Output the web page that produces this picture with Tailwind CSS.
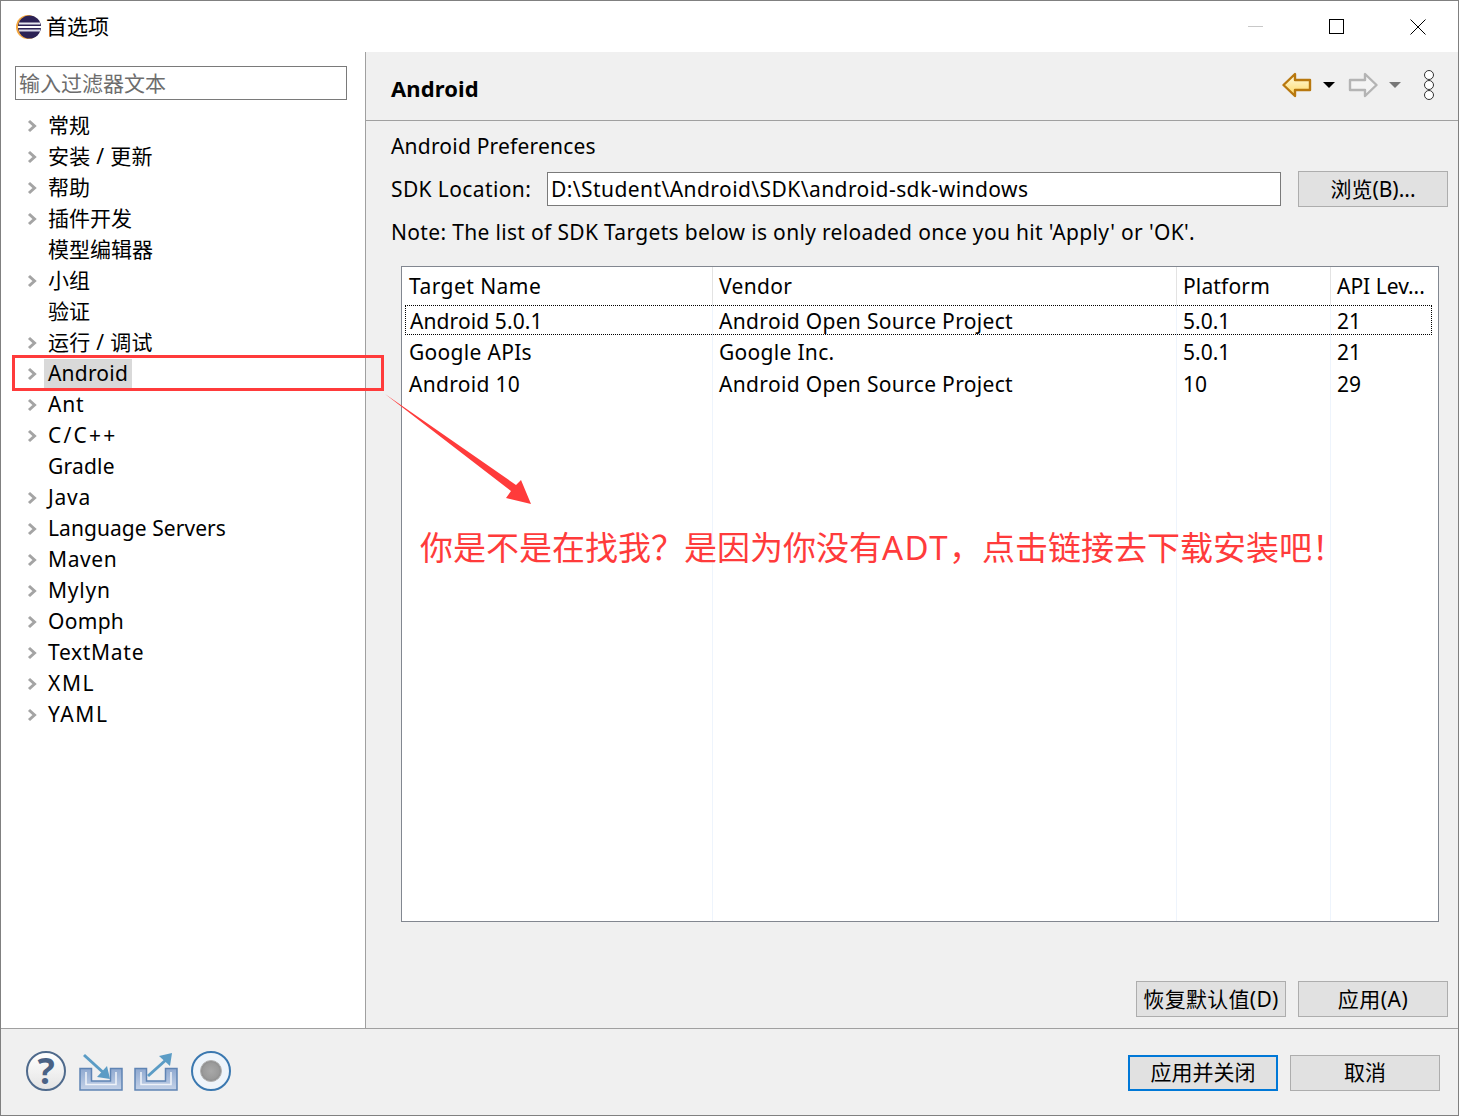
<!DOCTYPE html>
<html lang="zh-CN">
<head>
<meta charset="UTF-8">
<title>首选项</title>
<script src="https://cdn.jsdelivr.net/npm/@tailwindcss/browser@4"></script>
</head>
<body class="m-0 bg-white">
<div class="relative w-[1459px] h-[1116px] overflow-hidden border border-[#808080] flex flex-col bg-white text-black text-[21px] font-['Noto_Sans','Noto_Sans_CJK_SC',sans-serif]">

  <!-- title bar -->
  <div class="h-[51px] shrink-0 flex items-center bg-white">
    <svg class="ml-[15px] w-[26px] h-[26px]" viewBox="0 0 26 26">
      <circle cx="12" cy="13" r="12" fill="#f5a840"/>
      <circle cx="13.5" cy="13" r="11.5" fill="#2c2255"/>
      <rect x="3" y="8.5" width="21" height="2" fill="#e8e8f0"/>
      <rect x="2" y="12" width="23" height="2" fill="#fff"/>
      <rect x="3" y="15.5" width="21" height="2" fill="#d8d8e8"/>
    </svg>
    <span class="ml-[4px] text-[21px] leading-none">首选项</span>
    <div class="ml-auto flex items-center">
      <div class="w-[15px] h-px bg-[#c8c8c8] mr-[66px]"></div>
      <div class="w-[15px] h-[15px] border border-black mr-[66px]"></div>
      <svg class="w-[16px] h-[16px] mr-[32px]" viewBox="0 0 16 16"><path d="M0.5 0.5L15.5 15.5M15.5 0.5L0.5 15.5" stroke="#000" stroke-width="1"/></svg>
    </div>
  </div>

  <div class="flex-1 flex min-h-0">
    <!-- left tree -->
    <div class="w-[365px] shrink-0 bg-white border-r border-[#a0a0a0] pt-[14px]">
      <div class="ml-[14px] w-[332px] h-[34px] border border-[#7a7a7a] flex items-center pl-[3px] pt-[2px] text-[#6d6d6d]">输入过滤器文本</div>
      <div class="mt-[10px] flex flex-col">
        <div class="h-[31px] flex items-center pl-[26px]"><svg class="w-[10px] h-[14px]" viewBox="0 0 10 14"><path d="M2 2L7.5 7L2 12" fill="none" stroke="#a4a4a4" stroke-width="3"/></svg><span class="ml-[11px]">常规</span></div>
        <div class="h-[31px] flex items-center pl-[26px]"><svg class="w-[10px] h-[14px]" viewBox="0 0 10 14"><path d="M2 2L7.5 7L2 12" fill="none" stroke="#a4a4a4" stroke-width="3"/></svg><span class="ml-[11px] tracking-[0.3px]">安装 / 更新</span></div>
        <div class="h-[31px] flex items-center pl-[26px]"><svg class="w-[10px] h-[14px]" viewBox="0 0 10 14"><path d="M2 2L7.5 7L2 12" fill="none" stroke="#a4a4a4" stroke-width="3"/></svg><span class="ml-[11px]">帮助</span></div>
        <div class="h-[31px] flex items-center pl-[26px]"><svg class="w-[10px] h-[14px]" viewBox="0 0 10 14"><path d="M2 2L7.5 7L2 12" fill="none" stroke="#a4a4a4" stroke-width="3"/></svg><span class="ml-[11px]">插件开发</span></div>
        <div class="h-[31px] flex items-center pl-[47px]">模型编辑器</div>
        <div class="h-[31px] flex items-center pl-[26px]"><svg class="w-[10px] h-[14px]" viewBox="0 0 10 14"><path d="M2 2L7.5 7L2 12" fill="none" stroke="#a4a4a4" stroke-width="3"/></svg><span class="ml-[11px]">小组</span></div>
        <div class="h-[31px] flex items-center pl-[47px]">验证</div>
        <div class="h-[31px] flex items-center pl-[26px]"><svg class="w-[10px] h-[14px]" viewBox="0 0 10 14"><path d="M2 2L7.5 7L2 12" fill="none" stroke="#a4a4a4" stroke-width="3"/></svg><span class="ml-[11px] tracking-[0.3px]">运行 / 调试</span></div>
        <div class="h-[31px] flex items-center pl-[26px]"><svg class="w-[10px] h-[14px]" viewBox="0 0 10 14"><path d="M2 2L7.5 7L2 12" fill="none" stroke="#a4a4a4" stroke-width="3"/></svg><span class="ml-[7px] px-[4px] bg-[#d9d9d9] h-[30px] flex items-center tracking-[0.2px]">Android</span></div>
        <div class="h-[31px] flex items-center pl-[26px]"><svg class="w-[10px] h-[14px]" viewBox="0 0 10 14"><path d="M2 2L7.5 7L2 12" fill="none" stroke="#a4a4a4" stroke-width="3"/></svg><span class="ml-[11px] tracking-[0.8px]">Ant</span></div>
        <div class="h-[31px] flex items-center pl-[26px]"><svg class="w-[10px] h-[14px]" viewBox="0 0 10 14"><path d="M2 2L7.5 7L2 12" fill="none" stroke="#a4a4a4" stroke-width="3"/></svg><span class="ml-[11px] tracking-[2.2px]">C/C++</span></div>
        <div class="h-[31px] flex items-center pl-[47px] tracking-[0.2px]">Gradle</div>
        <div class="h-[31px] flex items-center pl-[26px]"><svg class="w-[10px] h-[14px]" viewBox="0 0 10 14"><path d="M2 2L7.5 7L2 12" fill="none" stroke="#a4a4a4" stroke-width="3"/></svg><span class="ml-[11px] tracking-[0.8px]">Java</span></div>
        <div class="h-[31px] flex items-center pl-[26px]"><svg class="w-[10px] h-[14px]" viewBox="0 0 10 14"><path d="M2 2L7.5 7L2 12" fill="none" stroke="#a4a4a4" stroke-width="3"/></svg><span class="ml-[11px] tracking-[0.06px]">Language Servers</span></div>
        <div class="h-[31px] flex items-center pl-[26px]"><svg class="w-[10px] h-[14px]" viewBox="0 0 10 14"><path d="M2 2L7.5 7L2 12" fill="none" stroke="#a4a4a4" stroke-width="3"/></svg><span class="ml-[11px] tracking-[0.6px]">Maven</span></div>
        <div class="h-[31px] flex items-center pl-[26px]"><svg class="w-[10px] h-[14px]" viewBox="0 0 10 14"><path d="M2 2L7.5 7L2 12" fill="none" stroke="#a4a4a4" stroke-width="3"/></svg><span class="ml-[11px] tracking-[0.8px]">Mylyn</span></div>
        <div class="h-[31px] flex items-center pl-[26px]"><svg class="w-[10px] h-[14px]" viewBox="0 0 10 14"><path d="M2 2L7.5 7L2 12" fill="none" stroke="#a4a4a4" stroke-width="3"/></svg><span class="ml-[11px] tracking-[0.3px]">Oomph</span></div>
        <div class="h-[31px] flex items-center pl-[26px]"><svg class="w-[10px] h-[14px]" viewBox="0 0 10 14"><path d="M2 2L7.5 7L2 12" fill="none" stroke="#a4a4a4" stroke-width="3"/></svg><span class="ml-[11px] tracking-[0.7px]">TextMate</span></div>
        <div class="h-[31px] flex items-center pl-[26px]"><svg class="w-[10px] h-[14px]" viewBox="0 0 10 14"><path d="M2 2L7.5 7L2 12" fill="none" stroke="#a4a4a4" stroke-width="3"/></svg><span class="ml-[11px] tracking-[1.6px]">XML</span></div>
        <div class="h-[31px] flex items-center pl-[26px]"><svg class="w-[10px] h-[14px]" viewBox="0 0 10 14"><path d="M2 2L7.5 7L2 12" fill="none" stroke="#a4a4a4" stroke-width="3"/></svg><span class="ml-[11px] tracking-[1.6px]">YAML</span></div>
      </div>
    </div>

    <!-- right page -->
    <div class="flex-1 min-w-0 bg-[#f0f0f0] flex flex-col">
      <div class="h-[69px] shrink-0 border-b border-[#a0a0a0] flex items-center pl-[25px]">
        <span class="font-bold text-[22px] mt-[4px] tracking-[0.1px]">Android</span>
        <div class="ml-auto flex items-center mr-[25px] mb-[2px]">
          <svg class="w-[30px] h-[26px]" viewBox="0 0 30 26"><defs><linearGradient id="lg" x1="0" y1="0" x2="0" y2="1"><stop offset="0" stop-color="#fffde8"/><stop offset="1" stop-color="#ffd860"/></linearGradient></defs><path d="M1.5 13L13 2V8H28V18H13V24Z" fill="url(#lg)" stroke="#b8780f" stroke-width="2.4" stroke-linejoin="round"/></svg>
          <div class="ml-[11px] w-0 h-0 border-x-[6px] border-x-transparent border-t-[6px] border-t-black"></div>
          <svg class="ml-[13px] w-[30px] h-[26px]" viewBox="0 0 30 26"><path d="M28.5 13L17 2V8H2V18H17V24Z" fill="#f4f4f4" stroke="#b4b4b4" stroke-width="2.4" stroke-linejoin="round"/></svg>
          <div class="ml-[11px] w-0 h-0 border-x-[6px] border-x-transparent border-t-[6px] border-t-[#777]"></div>
          <div class="ml-[23px] -mr-px flex flex-col items-center">
            <div class="w-[10px] h-[10px] rounded-full border-[1.5px] border-[#333] bg-white"></div>
            <div class="w-[10px] h-[10px] rounded-full border-[1.5px] border-[#333] bg-white"></div>
            <div class="w-[10px] h-[10px] rounded-full border-[1.5px] border-[#333] bg-white"></div>
          </div>
        </div>
      </div>

      <div class="flex-1 min-h-0 flex flex-col pl-[25px] pr-[10px]">
        <div class="mt-[11px] h-[30px] flex items-center tracking-[0.2px]">Android Preferences</div>
        <div class="mt-[9px] h-[36px] flex items-center">
          <span class="w-[156px] pt-[2px] tracking-[0.38px]">SDK Location:</span>
          <div class="w-[734px] h-[34px] bg-white border border-[#7a7a7a] flex items-center pl-[3px] pt-[2px] tracking-[0.43px]">D:\Student\Android\SDK\android-sdk-windows</div>
          <div class="ml-[17px] w-[150px] h-[36px] bg-[#e1e1e1] border border-[#adadad] flex items-center justify-center pt-[2px]">浏览(B)...</div>
        </div>
        <div class="mt-[11px] h-[30px] flex items-center tracking-[0.33px]">Note: The list of SDK Targets below is only reloaded once you hit 'Apply' or 'OK'.</div>

        <!-- target table -->
        <div class="relative mt-[18px] ml-[10px] w-[1038px] h-[656px] bg-white border border-[#828790]">
          <div class="absolute top-0 bottom-0 left-[310px] w-px bg-[#eef4fc]"></div>
          <div class="absolute top-0 bottom-0 left-[774px] w-px bg-[#eef4fc]"></div>
          <div class="absolute top-0 bottom-0 left-[928px] w-px bg-[#eef4fc]"></div>
          <div class="absolute top-0 h-[38px] left-[310px] w-px bg-[#e3e3e3]"></div>
          <div class="absolute top-0 h-[38px] left-[774px] w-px bg-[#e3e3e3]"></div>
          <div class="absolute top-0 h-[38px] left-[928px] w-px bg-[#e3e3e3]"></div>
          <div class="relative grid grid-cols-[310px_464px_154px_1fr] h-[38px] items-center pt-[2px]">
            <span class="pl-[7px] tracking-[0.45px]">Target Name</span><span class="pl-[7px] tracking-[0.35px]">Vendor</span><span class="pl-[7px] tracking-[0.15px]">Platform</span><span class="pl-[7px] whitespace-nowrap">API Lev...</span>
          </div>
          <div class="relative grid grid-cols-[306px_464px_154px_1fr] h-[30px] items-center ml-[3px] w-[1027px] pb-[6px] border border-dotted border-black">
            <span class="pl-[4px] tracking-[0.1px]">Android 5.0.1</span><span class="pl-[7px] tracking-[0.33px]">Android Open Source Project</span><span class="pl-[7px]">5.0.1</span><span class="pl-[7px]">21</span>
          </div>
          <div class="relative grid grid-cols-[310px_464px_154px_1fr] h-[32px] mt-[2px] items-center">
            <span class="pl-[7px] tracking-[0.3px]">Google APIs</span><span class="pl-[7px] tracking-[0.3px]">Google Inc.</span><span class="pl-[7px]">5.0.1</span><span class="pl-[7px]">21</span>
          </div>
          <div class="relative grid grid-cols-[310px_464px_154px_1fr] h-[32px] items-center">
            <span class="pl-[7px] tracking-[0.3px]">Android 10</span><span class="pl-[7px] tracking-[0.33px]">Android Open Source Project</span><span class="pl-[7px]">10</span><span class="pl-[7px]">29</span>
          </div>
        </div>

        <div class="mt-auto mb-[11px] flex justify-end gap-[12px]">
          <div class="w-[150px] h-[36px] bg-[#e1e1e1] border border-[#adadad] flex items-center justify-center pt-[2px] tracking-[0.3px]">恢复默认值(D)</div>
          <div class="w-[150px] h-[36px] bg-[#e1e1e1] border border-[#adadad] flex items-center justify-center pt-[2px] tracking-[0.5px]">应用(A)</div>
        </div>
      </div>
    </div>
  </div>

  <!-- bottom bar -->
  <div class="h-[87px] shrink-0 bg-[#f0f0f0] border-t border-[#a0a0a0] flex items-center">
    <div class="ml-[25px] mb-[2px] flex items-center">
      <div class="w-[40px] h-[40px] rounded-full border-2 border-[#4f6a8c] bg-gradient-to-b from-white to-[#e4e4e4] flex items-center justify-center text-[36px] font-bold text-[#4a6285] leading-none">?</div>
      <svg class="ml-[13px] w-[44px] h-[40px]" viewBox="0 0 44 40">
        <defs><linearGradient id="tray" x1="0" y1="0" x2="0" y2="1"><stop offset="0" stop-color="#8fa9d0"/><stop offset="1" stop-color="#c4d2e8"/></linearGradient></defs>
        <path d="M1 17.5H12.5V30H31.5V17.5H43V39H1Z" fill="url(#tray)" stroke="#5f84b4" stroke-width="1.5"/>
        <path d="M7 21V33.5H37V21" fill="none" stroke="#eef2f8" stroke-width="1.6"/>
        <path d="M5 4L27 24" stroke="#5b9cc5" stroke-width="3"/>
        <path d="M31 28L18 26L28 15Z" fill="#5b9cc5"/>
      </svg>
      <svg class="ml-[11px] w-[44px] h-[40px]" viewBox="0 0 44 40">
        <path d="M1 17.5H12.5V30H31.5V17.5H43V39H1Z" fill="url(#tray)" stroke="#5f84b4" stroke-width="1.5"/>
        <path d="M7 21V33.5H37V21" fill="none" stroke="#eef2f8" stroke-width="1.6"/>
        <path d="M14 25L33 8" stroke="#5b9cc5" stroke-width="3"/>
        <path d="M38 2L36 15L25 5Z" fill="#5b9cc5"/>
      </svg>
      <svg class="ml-[13px] w-[40px] h-[40px]" viewBox="0 0 40 40">
        <defs><radialGradient id="disc"><stop offset="0" stop-color="#a8a8a8"/><stop offset="0.75" stop-color="#9a9a9a"/><stop offset="1" stop-color="#8a8a8a"/></radialGradient></defs>
        <circle cx="20" cy="20" r="19" fill="#eef4fa" stroke="#3a78b0" stroke-width="2"/>
        <circle cx="20" cy="20" r="10.5" fill="url(#disc)" stroke="#b4b4b4" stroke-width="1"/>
      </svg>
    </div>
    <div class="ml-auto mr-[18px] mt-[2px] flex gap-[12px]">
      <div class="w-[150px] h-[36px] bg-[#e1e1e1] border-2 border-[#0078d7] flex items-center justify-center">应用并关闭</div>
      <div class="w-[150px] h-[36px] bg-[#e1e1e1] border border-[#adadad] flex items-center justify-center">取消</div>
    </div>
  </div>

  <!-- red annotation over the dialog -->
  <div class="absolute left-[11px] top-[354px] w-[372px] h-[36px] border-[3px] border-[#ff3b3b]"></div>
  <svg class="absolute left-[383px] top-[392px] w-[150px] h-[114px]" viewBox="0 0 150 114"><path d="M1 1L132 92L137 87L147 111L122 105L127 98Z" fill="#ff3b3b"/></svg>
  <div class="absolute left-[419px] top-[522px] text-[33px] leading-[50px] whitespace-nowrap text-[#ff3b3b]">你是不是在找我&#xFF1F;是因为你没有<span class="tracking-[1.5px]">ADT</span>&#xFF0C;点击链接去下载安装吧&#xFF01;</div>
</div>
</body>
</html>
